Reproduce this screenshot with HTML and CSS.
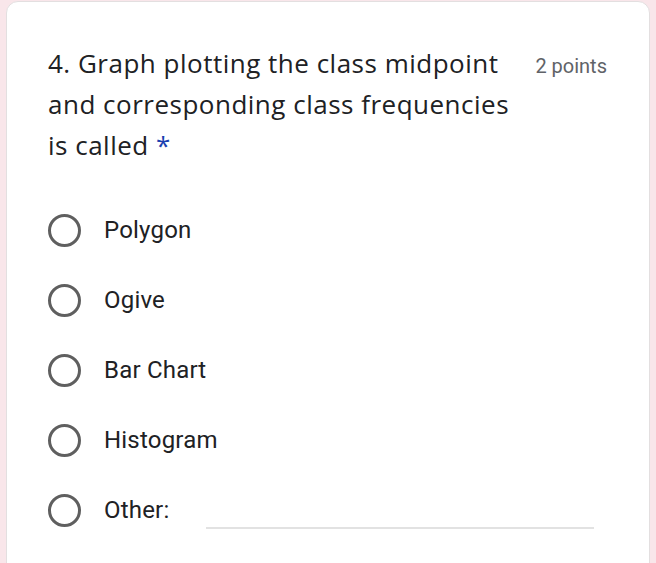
FILE: index.html
```html
<!DOCTYPE html>
<html lang="en">
<head>
    <meta charset="UTF-8">
    <title>Question 4</title>
    <link rel="stylesheet" href="styles.css">
</head>
<body>
    <div class="card">
        <div class="question-head">
            <div class="question-title">4. Graph plotting the class midpoint and corresponding class frequencies is called <span class="required">*</span></div>
            <div class="points">2 points</div>
        </div>
        <div class="options">
            <label class="option"><span class="radio"></span><span class="option-text">Polygon</span></label>
            <label class="option"><span class="radio"></span><span class="option-text">Ogive</span></label>
            <label class="option"><span class="radio"></span><span class="option-text">Bar Chart</span></label>
            <label class="option"><span class="radio"></span><span class="option-text">Histogram</span></label>
            <label class="option other"><span class="radio"></span><span class="option-text">Other:</span><span class="other-line"></span></label>
        </div>
    </div>
</body>
</html>
```

FILE: styles.css
```css
html, body {
    margin: 0;
    height: 100%;
    overflow: hidden;
}
body {
    background: #f9e6ea;
    padding: 1px 6px 0 6px;
    box-sizing: border-box;
    font-family: 'Roboto', 'Liberation Sans', sans-serif;
}
.card {
    background: #fff;
    border: 1px solid #e3dfe0;
    border-radius: 12px;
    height: 620px;
    padding: 41px 42px 0 41px;
    box-sizing: border-box;
}
.question-head {
    display: flex;
    align-items: flex-start;
    justify-content: space-between;
}
.question-title {
    width: 476px;
    font-family: 'Open Sans', sans-serif;
    font-size: 26px;
    letter-spacing: 0.5px;
    line-height: 41px;
    color: #202124;
}
.required {
    color: #1a3fb0;
}
.points {
    font-size: 20px;
    line-height: 24px;
    margin-top: 11px;
    color: #5f6368;
}
.options {
    margin-top: 47px;
    display: flex;
    flex-direction: column;
    gap: 36px;
}
.option {
    display: flex;
    align-items: center;
    height: 34px;
}
.radio {
    width: 27px;
    height: 27px;
    border: 3.5px solid #5f5f5f;
    border-radius: 50%;
    flex: none;
}
.option-text {
    margin-left: 23px;
    font-size: 24px;
    letter-spacing: 0.2px;
    color: #202124;
}
.other-line {
    align-self: flex-end;
    margin-left: 37px;
    margin-bottom: -2px;
    width: 388px;
    height: 2px;
    background: #e2e2e2;
}
```
